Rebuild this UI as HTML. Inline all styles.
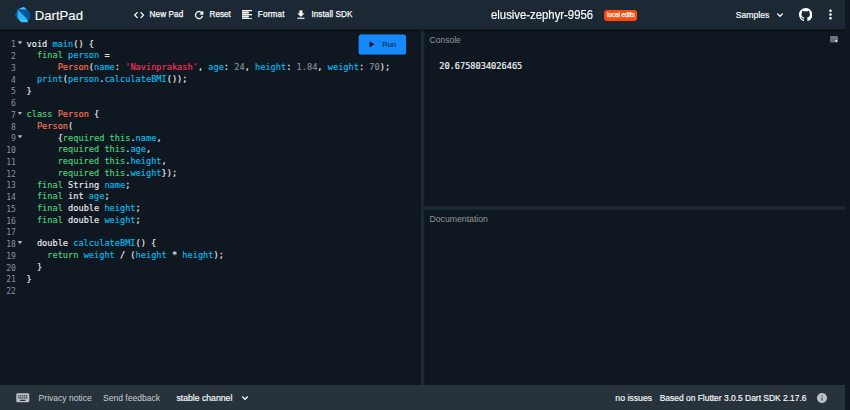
<!DOCTYPE html>
<html><head><meta charset="utf-8"><title>DartPad</title>
<style>
*{box-sizing:border-box;margin:0;padding:0}
html,body{width:850px;height:410px;overflow:hidden;background:#0f1720}
body{position:relative;font-family:"Liberation Sans",sans-serif;color:#fff}
.abs{position:absolute}
#hdr{left:0;top:0;width:845px;height:30px;z-index:5}
#ftr{left:0;top:385px;width:845px;height:25px;z-index:5}
.t{position:absolute;white-space:pre;line-height:1}
.h{font-size:8.15px;color:#f8f9fa;top:10.75px;-webkit-text-stroke:.25px}
svg{position:absolute;display:block}
#code{left:0;top:38.6px;-webkit-text-stroke:.15px;font-family:"DejaVu Sans Mono","Liberation Mono",monospace;font-size:8.637px;line-height:11.757px;color:#e9ebee}
#code div{height:11.757px;position:relative}
#code i{-webkit-text-stroke:0;font-style:normal;position:absolute;left:0;top:.7px;width:15.9px;text-align:right;color:#8b939b;font-size:8.05px}
#code b{font-weight:normal;position:absolute;left:26.5px;white-space:pre}
#code u{text-decoration:none;position:absolute;left:17.7px;top:2.6px;width:4.5px;height:3.3px;background:#b0b6bc;clip-path:polygon(0 0,100% 0,50% 100%)}
.k{color:#49d27a}.c{color:#f5754f}.v{color:#06bce8}.s{color:#f0325f}.n{color:#848c94}
.f{font-size:8.55px;top:393.8px;color:#c9cdd1}
</style></head><body>
<svg style="left:0;top:0;z-index:0" width="850" height="410" viewBox="0 0 850 410">
<defs><linearGradient id="sh" x1="0" y1="0" x2="0" y2="1"><stop offset="0" stop-color="#000" stop-opacity=".5"/><stop offset=".5" stop-color="#000" stop-opacity=".2"/><stop offset="1" stop-color="#000" stop-opacity="0"/></linearGradient>
<filter id="bs" x="-20%" y="-40%" width="140%" height="180%"><feDropShadow dx="0" dy=".5" stdDeviation=".9" flood-color="#000" flood-opacity=".85"/></filter></defs>
<rect x="420.8" y="29" width="3.55" height="357" fill="#1c2834"/>
<rect x="421" y="206.05" width="424" height="3.75" fill="#1c2834"/>
<rect x="0" y="29.4" width="845" height="3.4" fill="url(#sh)"/>
<rect x="0" y="0" width="845" height="29.4" fill="#1c2834"/>
<rect x="0" y="385" width="845" height="25" fill="#28323b"/>
<rect x="358.7" y="34.4" width="47.35" height="20.1" rx="2.6" fill="#168afd" filter="url(#bs)"/>
<rect x="604.1" y="9.9" width="33" height="11" rx="3" fill="#ff4a0d"/>
</svg>
<div id="hdr" class="abs">
<svg style="left:14.7px;top:7.35px" width="15.5" height="15.2" viewBox="0 0 502.87 502.87" preserveAspectRatio="none">
<path d="M102.56 400.31L16.6 314.35C6.4 303.89 0 289.11 0 274.66c0-6.69 3.77-17.16 6.62-23.15L86 86.14z" fill="#01579b"/>
<path d="M397 102.56L311.05 16.6C303.55 9.06 287.92 0 274.69 0c-11.37 0-22.52 2.29-29.72 6.61L86.04 86z" fill="#40c4ff"/>
<path d="M205.11 502.87h208.37v-89.29L258.03 363.95l-142.21 49.63z" fill="#40c4ff"/>
<path d="M86 354.05c0 26.53 3.33 33.04 16.53 46.31l13.23 13.23h297.7L267.94 248.23 86 86z" fill="#29b6f6"/>
<path d="M350.7 85.98H86l327.48 327.47h89.3V208.37L396.95 102.53c-14.87-14.91-28.08-16.55-46.25-16.55z" fill="#01579b"/>
</svg>
<span class="t" style="left:34.65px;top:8.75px;font-size:13.2px;-webkit-text-stroke:.15px;color:#f8f9fa">DartPad</span>

<svg style="left:132.5px;top:8.55px" width="12.2" height="12.2" viewBox="0 0 24 24"><path fill="#fff" stroke="#fff" stroke-width=".7" d="M9.4 16.6L4.8 12l4.6-4.6L8 6l-6 6 6 6 1.4-1.4zm5.2 0l4.6-4.6-4.6-4.6L16 6l6 6-6 6-1.4-1.4z"/></svg>
<span class="t h" style="left:149.6px;letter-spacing:.1px">New Pad</span>
<svg style="left:193.1px;top:8.7px" width="12.2" height="12.2" viewBox="0 0 24 24"><path fill="#fff" stroke="#fff" stroke-width=".6" d="M17.65 6.35C16.2 4.9 14.21 4 12 4c-4.42 0-7.99 3.58-7.99 8s3.57 8 7.99 8c3.73 0 6.84-2.55 7.73-6h-2.08c-.82 2.33-3.04 4-5.65 4-3.31 0-6-2.69-6-6s2.69-6 6-6c1.66 0 3.14.69 4.22 1.78L13 11h7V4l-2.35 2.35z"/></svg>
<span class="t h" style="left:209.6px">Reset</span>
<svg style="left:241.9px;top:9.9px" width="10.2" height="9.4" viewBox="0 0 10.2 9.4"><rect x="0" y="0" width="6.8" height="9.4" fill="#fff" opacity=".4"/><g fill="#fff"><rect x="0" y="0" width="10.2" height="1.25"/><rect x="0" y="2.04" width="6.8" height="1.25"/><rect x="0" y="4.08" width="10.2" height="1.25"/><rect x="0" y="6.11" width="6.8" height="1.25"/><rect x="0" y="8.15" width="10.2" height="1.25"/></g></svg>
<span class="t h" style="left:257.8px;letter-spacing:.2px">Format</span>
<svg style="left:294.75px;top:8.95px" width="11.8" height="11.8" viewBox="0 0 24 24"><path fill="#fff" stroke="#fff" stroke-width=".3" d="M19 9h-4V3H9v6H5l7 7 7-7zM5 18v2h14v-2H5z"/></svg>
<span class="t h" style="left:311.4px;letter-spacing:.08px">Install SDK</span>

<span class="t" style="left:490.8px;top:8.85px;font-size:12.4px;transform:scaleX(.915);transform-origin:0 0;-webkit-text-stroke:.2px;color:#f8f9fa">elusive-zephyr-9956</span>
<span class="t" style="left:606.9px;top:12.4px;font-size:6.3px;-webkit-text-stroke:.25px;color:#fff">local edits</span>

<span class="t" style="left:735.8px;top:10.7px;font-size:8.65px;-webkit-text-stroke:.2px;color:#f6f7f8">Samples</span>
<svg style="left:774.2px;top:8.9px" width="12" height="12" viewBox="0 0 24 24"><path fill="#fff" stroke="#fff" stroke-width=".8" d="M16.59 8.59L12 13.17 7.41 8.59 6 10l6 6 6-6z"/></svg>
<svg style="left:798.7px;top:8.3px" width="13.4" height="13.4" viewBox="0 0 16 16"><path fill="#fff" d="M8 0C3.58 0 0 3.58 0 8c0 3.54 2.29 6.53 5.47 7.59.4.07.55-.17.55-.38 0-.19-.01-.82-.01-1.49-2.01.37-2.53-.49-2.69-.94-.09-.23-.48-.94-.82-1.13-.28-.15-.68-.52-.01-.53.63-.01 1.08.58 1.23.82.72 1.21 1.87.87 2.33.66.07-.52.28-.87.51-1.07-1.78-.2-3.64-.89-3.64-3.95 0-.87.31-1.59.82-2.15-.08-.2-.36-1.02.08-2.12 0 0 .67-.21 2.2.82.64-.18 1.32-.27 2-.27.68 0 1.36.09 2 .27 1.53-1.04 2.2-.82 2.2-.82.44 1.1.16 1.92.08 2.12.51.56.82 1.27.82 2.15 0 3.07-1.87 3.75-3.65 3.95.29.25.54.73.54 1.48 0 1.07-.01 1.93-.01 2.2 0 .21.15.46.55.38A8.013 8.013 0 0016 8c0-4.42-3.58-8-8-8z"/></svg>
<svg style="left:822.96px;top:7.23px" width="15" height="15" viewBox="0 0 24 24"><path fill="#fff" d="M12 8c1.1 0 2-.9 2-2s-.9-2-2-2-2 .9-2 2 .9 2 2 2zm0 2c-1.1 0-2 .9-2 2s.9 2 2 2 2-.9 2-2-.9-2-2-2zm0 6c-1.1 0-2 .9-2 2s.9 2 2 2 2-.9 2-2-.9-2-2-2z"/></svg>
</div>


<div id="code" class="abs">
<div><i>1</i><u></u><b>void <span class="v">main</span>() {</b></div>
<div><i>2</i><b>  <span class="k">final</span> <span class="v">person</span> =</b></div>
<div><i>3</i><b>      <span class="c">Person</span>(<span class="v">name</span>: <span class="s">'Navinprakash'</span>, <span class="v">age</span>: <span class="n">24</span>, <span class="v">height</span>: <span class="n">1.84</span>, <span class="v">weight</span>: <span class="n">70</span>);</b></div>
<div><i>4</i><b>  <span class="v">print</span>(<span class="v">person</span>.<span class="v">calculateBMI</span>());</b></div>
<div><i>5</i><b>}</b></div>
<div><i>6</i><b></b></div>
<div><i>7</i><u></u><b><span class="k">class</span> <span class="c">Person</span> {</b></div>
<div><i>8</i><b>  <span class="c">Person</span>(</b></div>
<div><i>9</i><u></u><b>      {<span class="k">required</span> <span class="k">this</span>.<span class="v">name</span>,</b></div>
<div><i>10</i><b>      <span class="k">required</span> <span class="k">this</span>.<span class="v">age</span>,</b></div>
<div><i>11</i><b>      <span class="k">required</span> <span class="k">this</span>.<span class="v">height</span>,</b></div>
<div><i>12</i><b>      <span class="k">required</span> <span class="k">this</span>.<span class="v">weight</span>});</b></div>
<div><i>13</i><b>  <span class="k">final</span> String <span class="v">name</span>;</b></div>
<div><i>14</i><b>  <span class="k">final</span> int <span class="v">age</span>;</b></div>
<div><i>15</i><b>  <span class="k">final</span> double <span class="v">height</span>;</b></div>
<div><i>16</i><b>  <span class="k">final</span> double <span class="v">weight</span>;</b></div>
<div><i>17</i><b></b></div>
<div><i>18</i><u></u><b>  double <span class="v">calculateBMI</span>() {</b></div>
<div><i>19</i><b>    <span class="k">return</span> <span class="v">weight</span> / (<span class="v">height</span> * <span class="v">height</span>);</b></div>
<div><i>20</i><b>  }</b></div>
<div><i>21</i><b>}</b></div>
<div><i>22</i><b></b></div>
</div>

<svg style="left:366.1px;top:39.1px" width="10.6" height="10.6" viewBox="0 0 24 24"><path fill="#0c1826" d="M8 5v14l11-7z"/></svg>
<span class="t" style="left:382.3px;top:41px;font-size:7.8px;letter-spacing:-.15px;-webkit-text-stroke:.2px;color:#12325c">Run</span>

<span class="t" style="left:429.5px;top:36.1px;font-size:8.55px;color:#90969c">Console</span>
<span class="t" style="left:439.2px;top:61.7px;font-family:'DejaVu Sans Mono','Liberation Mono',monospace;font-size:8.637px;-webkit-text-stroke:.22px;color:#eceef0">20.6758034026465</span>
<svg style="left:829.9px;top:36.2px" width="7.9" height="6.4" viewBox="0 0 7.9 6.4"><rect width="7.9" height="6.4" rx=".4" fill="#5d656d"/><rect x=".3" y=".5" width="7.3" height="2.3" fill="#757c84"/><rect x=".5" y="3.6" width="4.4" height="2.2" fill="#6a7179"/><rect x="5.3" y="3.8" width="2" height="2" fill="#e8eaec"/></svg>
<span class="t" style="left:429.5px;top:215.45px;font-size:8.7px;color:#90969c">Documentation</span>

<div id="ftr" class="abs">
<svg style="left:14.6px;top:4.7px" width="15.6" height="15.6" viewBox="0 0 24 24"><path fill="#b9bec3" d="M20 5H4c-1.1 0-1.99.9-1.99 2L2 17c0 1.1.9 2 2 2h16c1.1 0 2-.9 2-2V7c0-1.1-.9-2-2-2zm-9 3h2v2h-2V8zm0 3h2v2h-2v-2zM8 8h2v2H8V8zm0 3h2v2H8v-2zm-1 2H5v-2h2v2zm0-3H5V8h2v2zm9 7H8v-2h8v2zm0-4h-2v-2h2v2zm0-3h-2V8h2v2zm3 3h-2v-2h2v2zm0-3h-2V8h2v2z"/></svg>
</div>
<span class="t f" style="left:38.6px;z-index:6">Privacy notice</span>
<span class="t f" style="left:103px;z-index:6">Send feedback</span>
<span class="t f" style="left:176.4px;color:#fafbfc;-webkit-text-stroke:.16px;z-index:6;font-size:8.68px">stable channel</span>
<svg style="left:239.4px;top:391.7px;z-index:6" width="12" height="12" viewBox="0 0 24 24"><path fill="#fff" stroke="#fff" stroke-width=".8" d="M16.59 8.59L12 13.17 7.41 8.59 6 10l6 6 6-6z"/></svg>
<span class="t f" style="left:615.3px;color:#fafbfc;-webkit-text-stroke:.16px;z-index:6;font-size:8.72px">no issues</span>
<span class="t f" style="left:659.7px;color:#fafbfc;-webkit-text-stroke:.16px;z-index:6;font-size:8.45px">Based on Flutter 3.0.5 Dart SDK 2.17.6</span>
<svg style="left:816px;top:391.6px;z-index:6" width="12" height="12" viewBox="0 0 24 24"><path fill="#bcc1c6" d="M12 2C6.48 2 2 6.48 2 12s4.48 10 10 10 10-4.48 10-10S17.52 2 12 2zm1 15h-2v-6h2v6zm0-8h-2V7h2v2z"/></svg>
</body></html>
